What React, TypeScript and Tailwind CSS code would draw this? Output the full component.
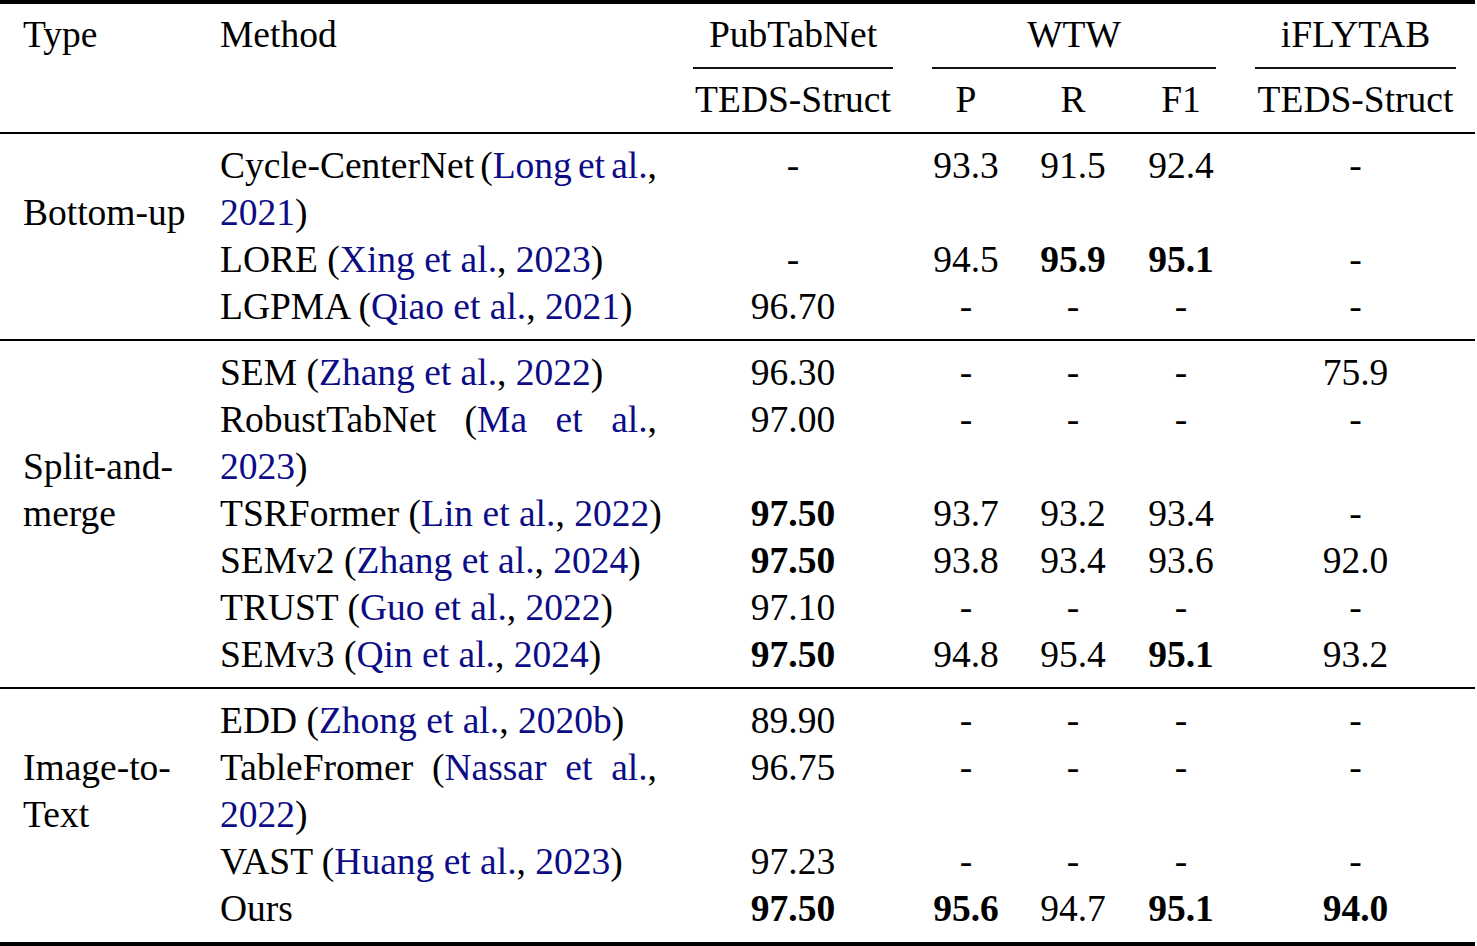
import React from "react";

const C = ({ children }: { children: React.ReactNode }) => (
  <span className="text-[#0c0c86]">{children}</span>
);

const cite = (author: string, year: string) => (
  <>
    (<C>{author}</C>, <C>{year}</C>)
  </>
);

type Row = {
  lines: React.ReactNode[][] | null; // justified lines as word arrays (all but last)
  last: React.ReactNode;
  vals: [string, string, string, string, string];
  bold?: boolean[];
};

const B = (v: string, b?: boolean) => (
  <span className={b ? "font-bold" : ""}>{v}</span>
);

function Values({ vals, bold }: { vals: string[]; bold?: boolean[] }) {
  const bb = bold || [false, false, false, false, false];
  return (
    <>
      <div className="ml-[36px] w-[200px] text-center">{B(vals[0], bb[0])}</div>
      <div className="ml-[39px] w-[68px] text-center">{B(vals[1], bb[1])}</div>
      <div className="ml-[39px] w-[68px] text-center">{B(vals[2], bb[2])}</div>
      <div className="ml-[39px] w-[70px] text-center">{B(vals[3], bb[3])}</div>
      <div className="ml-[39px] w-[201px] text-center">{B(vals[4], bb[4])}</div>
    </>
  );
}

function DataRow({ r }: { r: Row }) {
  return (
    <div className="flex items-start">
      <div className="w-[437px]">
        {r.lines &&
          r.lines.map((words, i) => (
            <div key={i} className="flex h-[47px] justify-between whitespace-nowrap">
              {words.map((w, j) => (
                <span key={j}>{w}</span>
              ))}
            </div>
          ))}
        <div className="h-[47px] whitespace-nowrap">{r.last}</div>
      </div>
      <div className="flex h-[47px]">
        <Values vals={r.vals} bold={r.bold} />
      </div>
    </div>
  );
}

function Group({ type, pad, rows }: { type: React.ReactNode; pad: string; rows: Row[] }) {
  return (
    <div className="flex">
      <div className="mr-[22px] w-[175px]">
        <div className={pad}>{type}</div>
      </div>
      <div className="flex flex-col">
        {rows.map((r, i) => (
          <DataRow key={i} r={r} />
        ))}
      </div>
    </div>
  );
}

const dash: [string, string, string, string, string] = ["-", "-", "-", "-", "-"];

const bottomUp: Row[] = [
  {
    lines: [["Cycle-CenterNet", <>(<C>Long</C></>, <C>et</C>, <><C>al.</C>,</>]],
    last: <><C>2021</C>)</>,
    vals: ["-", "93.3", "91.5", "92.4", "-"],
  },
  { lines: null, last: <>LORE {cite("Xing et al.", "2023")}</>, vals: ["-", "94.5", "95.9", "95.1", "-"], bold: [false, false, true, true, false] },
  { lines: null, last: <>LGPMA {cite("Qiao et al.", "2021")}</>, vals: ["96.70", "-", "-", "-", "-"] },
];

const splitMerge: Row[] = [
  { lines: null, last: <>SEM {cite("Zhang et al.", "2022")}</>, vals: ["96.30", "-", "-", "-", "75.9"] },
  {
    lines: [["RobustTabNet", <>(<C>Ma</C></>, <C>et</C>, <><C>al.</C>,</>]],
    last: <><C>2023</C>)</>,
    vals: ["97.00", "-", "-", "-", "-"],
  },
  { lines: null, last: <>TSRFormer {cite("Lin et al.", "2022")}</>, vals: ["97.50", "93.7", "93.2", "93.4", "-"], bold: [true, false, false, false, false] },
  { lines: null, last: <>SEMv2 {cite("Zhang et al.", "2024")}</>, vals: ["97.50", "93.8", "93.4", "93.6", "92.0"], bold: [true, false, false, false, false] },
  { lines: null, last: <>TRUST {cite("Guo et al.", "2022")}</>, vals: ["97.10", "-", "-", "-", "-"] },
  { lines: null, last: <>SEMv3 {cite("Qin et al.", "2024")}</>, vals: ["97.50", "94.8", "95.4", "95.1", "93.2"], bold: [true, false, false, true, false] },
];

const imageText: Row[] = [
  { lines: null, last: <>EDD {cite("Zhong et al.", "2020b")}</>, vals: ["89.90", "-", "-", "-", "-"] },
  {
    lines: [["TableFromer", <>(<C>Nassar</C></>, <C>et</C>, <><C>al.</C>,</>]],
    last: <><C>2022</C>)</>,
    vals: ["96.75", "-", "-", "-", "-"],
  },
  { lines: null, last: <>VAST {cite("Huang et al.", "2023")}</>, vals: ["97.23", "-", "-", "-", "-"] },
  { lines: null, last: <>Ours</>, vals: ["97.50", "95.6", "94.7", "95.1", "94.0"], bold: [true, true, false, true, true] },
];

export default function App() {
  void dash;
  return (
    <div className="h-[946px] w-[1477px] overflow-hidden bg-white font-['Liberation_Serif','Times_New_Roman',serif] text-[37.5px] leading-[47px] text-black">
      <div className="h-[4px] w-[1475px] bg-black" />
      {/* header row 1 */}
      <div className="mt-[7px] flex h-[47px] pl-[23px]">
        <div className="mr-[22px] w-[175px]">Type</div>
        <div className="w-[437px]">Method</div>
        <div className="ml-[36px] w-[200px] text-center">PubTabNet</div>
        <div className="ml-[39px] w-[284px] text-center">WTW</div>
        <div className="ml-[39px] w-[201px] text-center">iFLYTAB</div>
      </div>
      {/* cmidrules */}
      <div className="mt-[9px] flex h-[2px] pl-[693px]">
        <div className="w-[200px] bg-[#111]" />
        <div className="ml-[39px] w-[284px] bg-[#111]" />
        <div className="ml-[39px] w-[201px] bg-[#111]" />
      </div>
      {/* header row 2 */}
      <div className="mt-[7px] flex h-[47px] pl-[23px]">
        <div className="mr-[22px] w-[175px]" />
        <div className="w-[437px]" />
        <Values vals={["TEDS-Struct", "P", "R", "F1", "TEDS-Struct"]} />
      </div>
      <div className="mt-[9px] h-[2px] w-[1475px] bg-black" />
      <div className="pt-[8px] pl-[23px]">
        <Group type="Bottom-up" pad="pt-[47px]" rows={bottomUp} />
      </div>
      <div className="mt-[9px] h-[2px] w-[1475px] bg-black" />
      <div className="pt-[8px] pl-[23px]">
        <Group type="Split-and-merge" pad="pt-[94px]" rows={splitMerge} />
      </div>
      <div className="mt-[9px] h-[2px] w-[1475px] bg-black" />
      <div className="pt-[8px] pl-[23px]">
        <Group type="Image-to-Text" pad="pt-[47px]" rows={imageText} />
      </div>
      <div className="mt-[10px] h-[4px] w-[1475px] bg-black" />
    </div>
  );
}
